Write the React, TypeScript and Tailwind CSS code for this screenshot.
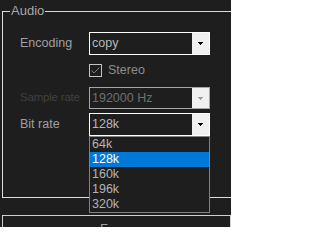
import React from "react";

const font = { fontFamily: '"Liberation Sans", Arial, sans-serif' };

function Arrow({ color }: { color: string }) {
  return (
    <svg width="5" height="3" viewBox="0 0 5 3" shapeRendering="crispEdges">
      <rect x="0" y="0" width="5" height="1" fill={color} />
      <rect x="1" y="1" width="3" height="1" fill={color} />
      <rect x="2" y="2" width="1" height="1" fill={color} />
    </svg>
  );
}

function Combo({ value, disabled, h }: { value: string; disabled?: boolean; h: string }) {
  return (
    <div
      className={`flex w-[121px] ${h} border ${
        disabled ? "border-[#a6a6a6] bg-[#f0f0f0]" : "border-[#ffffff] bg-[#f0f0f0]"
      }`}
    >
      <div
        className={`flex-1 flex items-center pl-[2px] bg-[#1e1e1e] text-[12.5px] ${
          disabled ? "text-[#6e6e6e]" : "text-[#b8b8b8]"
        }`}
      >
        {value}
      </div>
      <div className="w-[17px] flex items-center justify-center">
        <Arrow color={disabled ? "#a0a0a0" : "#000000"} />
      </div>
    </div>
  );
}

const bitRates = ["64k", "128k", "160k", "196k", "320k"];

export default function App() {
  return (
    <div className="w-[231px] h-[227px] bg-[#1e1e1e] overflow-hidden pl-[2px] pt-[4px]" style={font}>
      <fieldset className="w-[240px] h-[194px] border border-[#dcdcdc]">
        <legend className="ml-[7px] px-[1px] text-[13px] leading-[14px] text-[#a8a8a8]">Audio</legend>
        <div className="flex flex-col pl-[17px] pt-[14px] text-[12.5px] text-[#a0a0a0]">
          <div className="flex items-center h-[23px]">
            <span className="w-[69px]">Encoding</span>
            <Combo value="copy" h="h-[23px]" />
          </div>
          <div className="flex items-center h-[13px] mt-[9px] pl-[69px]">
            <div className="w-[13px] h-[13px] border border-[#c4c4c4] flex items-center justify-center">
              <svg width="11" height="11" viewBox="0 0 11 11">
                <path d="M1.5 5.5 L4 8 L9.5 2.5" fill="none" stroke="#7a7a7a" strokeWidth="1" />
              </svg>
            </div>
            <span className="ml-[6px] text-[#8c8c8c]">Stereo</span>
          </div>
          <div className="flex items-center h-[22px] mt-[10px]">
            <span className="w-[69px] text-[11.5px] tracking-[-0.2px] text-[#404040] whitespace-nowrap">Sample rate</span>
            <Combo value="192000 Hz" h="h-[22px]" disabled />
          </div>
          <div className="flex items-center h-[23px] mt-[4px]">
            <span className="w-[69px]">Bit rate</span>
            <div className="relative">
              <Combo value="128k" h="h-[23px]" />
              <div className="absolute left-0 top-[23px] w-[121px] border border-[#828282] bg-[#1e1e1e] z-10">
                {bitRates.map((r) => (
                  <div
                    key={r}
                    className={`h-[15px] leading-[15px] pl-[2px] ${
                      r === "128k" ? "bg-[#0078d7] text-white" : "text-[#b4b4b4]"
                    }`}
                  >
                    {r}
                  </div>
                ))}
              </div>
            </div>
          </div>
        </div>
      </fieldset>
      <div className="mt-[17px] w-[229px] h-[40px] border border-[#d0d0d0] pt-[3px] pl-[97px] text-[13px] text-[#a0a0a0]">
        F
      </div>
    </div>
  );
}
